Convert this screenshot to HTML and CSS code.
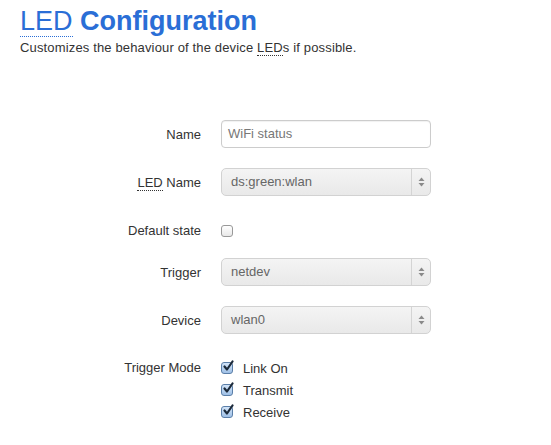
FILE: index.html
```html
<!DOCTYPE html>
<html>
<head>
<meta charset="utf-8">
<link rel="stylesheet" href="styles.css">
</head>
<body>
<div class="page">
  <h2 class="title"><abbr class="abbr">LED</abbr> <b>Configuration</b></h2>
  <p class="desc">Customizes the behaviour of the device <abbr class="abbr-s">LED</abbr>s if possible.</p>
  <div class="form">
    <div class="row">
      <div class="label">Name</div>
      <div class="field"><div class="input">WiFi status</div></div>
    </div>
    <div class="row">
      <div class="label"><abbr class="abbr-s">LED</abbr> Name</div>
      <div class="field"><div class="select"><span class="val">ds:green:wlan</span><span class="arrows"><svg width="7" height="10" viewBox="0 0 7 10"><path d="M3.5 0.5 L6.5 4 L0.5 4 Z" fill="#8a8a8a"/><path d="M3.5 9.5 L6.5 6 L0.5 6 Z" fill="#8a8a8a"/></svg></span></div></div>
    </div>
    <div class="row row-cb">
      <div class="label">Default state</div>
      <div class="field"><span class="cb"></span></div>
    </div>
    <div class="row">
      <div class="label">Trigger</div>
      <div class="field"><div class="select"><span class="val">netdev</span><span class="arrows"><svg width="7" height="10" viewBox="0 0 7 10"><path d="M3.5 0.5 L6.5 4 L0.5 4 Z" fill="#8a8a8a"/><path d="M3.5 9.5 L6.5 6 L0.5 6 Z" fill="#8a8a8a"/></svg></span></div></div>
    </div>
    <div class="row">
      <div class="label">Device</div>
      <div class="field"><div class="select"><span class="val">wlan0</span><span class="arrows"><svg width="7" height="10" viewBox="0 0 7 10"><path d="M3.5 0.5 L6.5 4 L0.5 4 Z" fill="#8a8a8a"/><path d="M3.5 9.5 L6.5 6 L0.5 6 Z" fill="#8a8a8a"/></svg></span></div></div>
    </div>
    <div class="row row-mode">
      <div class="label label-top">Trigger Mode</div>
      <div class="field field-list">
        <div class="opt"><span class="cb cb-on"><svg width="13" height="13" viewBox="0 0 13 13"><path d="M2.5 6.5 L5 9.5 L10.5 1.5" fill="none" stroke="#1c2a3a" stroke-width="2.2" stroke-linejoin="round" stroke-linecap="round"/></svg></span>Link On</div>
        <div class="opt"><span class="cb cb-on"><svg width="13" height="13" viewBox="0 0 13 13"><path d="M2.5 6.5 L5 9.5 L10.5 1.5" fill="none" stroke="#1c2a3a" stroke-width="2.2" stroke-linejoin="round" stroke-linecap="round"/></svg></span>Transmit</div>
        <div class="opt"><span class="cb cb-on"><svg width="13" height="13" viewBox="0 0 13 13"><path d="M2.5 6.5 L5 9.5 L10.5 1.5" fill="none" stroke="#1c2a3a" stroke-width="2.2" stroke-linejoin="round" stroke-linecap="round"/></svg></span>Receive</div>
      </div>
    </div>
  </div>
</div>
</body>
</html>
```
FILE: styles.css
```css
html, body { margin: 0; padding: 0; background: #fff; }
body { font-family: "Liberation Sans", Arial, sans-serif; color: #333; font-size: 13px; }
.page { padding: 6px 20px 0 20px; }
.title { margin: 0; font-size: 27px; font-weight: normal; color: #2a6ed6; line-height: 30px; }
.title b { font-weight: bold; }
.abbr { text-decoration: none; border-bottom: 1px dotted #2a6ed6; }
.abbr-s { text-decoration: none; border-bottom: 1px dotted #333; }
.desc { margin: 4px 0 0 0; font-size: 13px; line-height: 16px; color: #333; letter-spacing: 0.15px; }
.form { margin-top: 64px; display: flex; flex-direction: column; }
.row { display: flex; align-items: center; min-height: 28px; margin-bottom: 20px; }
.row-cb { margin-bottom: 14px; }
.row-mode { align-items: flex-start; margin-top: 3px; }
.label { width: 181px; text-align: right; padding-right: 20px; flex: none; font-size: 13px; }
.label-top { line-height: 22px; }
.field { width: 210px; }
.input { box-sizing: border-box; height: 28px; border: 1px solid #ccc; border-radius: 4px; padding: 0 6px; line-height: 26px; color: #777; font-size: 13px; box-shadow: inset 0 1px 1px rgba(0,0,0,0.06); }
.select { box-sizing: border-box; height: 28px; border: 1px solid #d2d2d2; border-radius: 5px; display: flex; background: linear-gradient(#f4f4f4, #e9e9e9); color: #666; font-size: 13px; }
.val { flex: 1; padding-left: 9px; line-height: 26px; }
.arrows { width: 18px; border-left: 1px solid #d4d4d4; display: flex; align-items: center; justify-content: center; }
.cb { display: inline-block; box-sizing: border-box; width: 12px; height: 12px; border: 1px solid #999; border-radius: 3px; background: linear-gradient(#fff, #e8e8e8); vertical-align: middle; }
.field-list { display: flex; flex-direction: column; }
.opt { display: flex; align-items: center; height: 22px; font-size: 13px; color: #333; }
.opt .cb { margin-right: 10px; position: relative; }
.cb-on { background: linear-gradient(#d2e4f8, #9fc0e6); border-color: #5a7ea8; }
.cb-on svg { position: absolute; left: 0; top: -3px; }
```
